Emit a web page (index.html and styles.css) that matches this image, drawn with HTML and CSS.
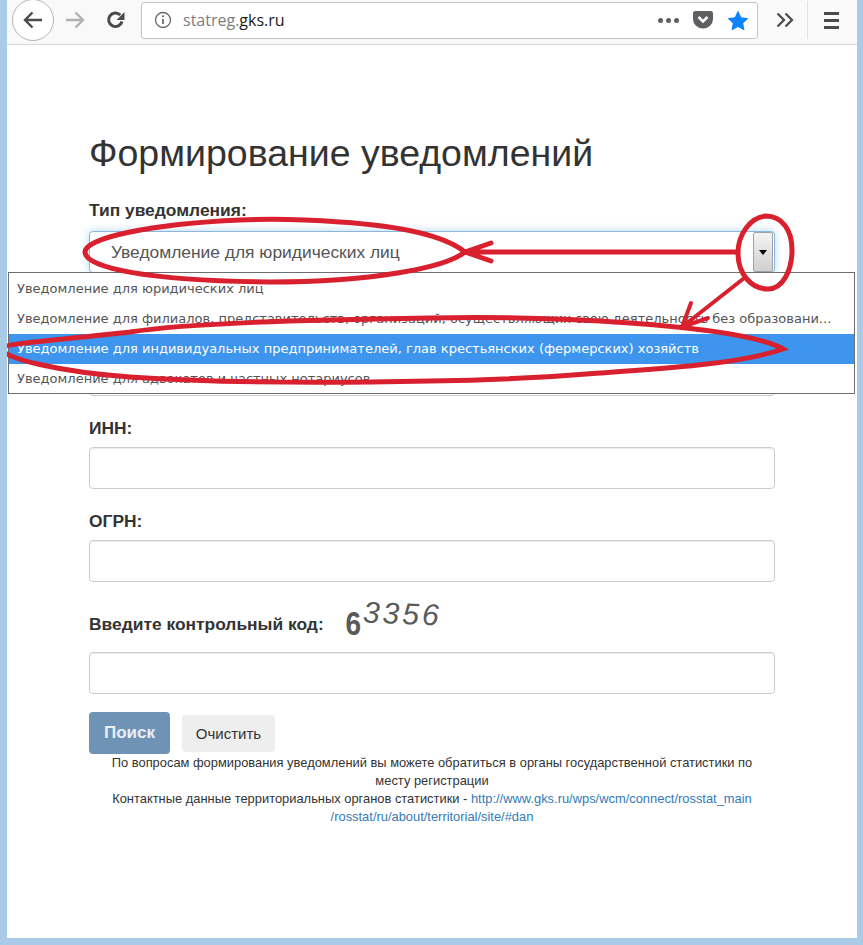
FILE: index.html
```html
<!DOCTYPE html>
<html lang="ru">
<head>
    <meta charset="UTF-8">
    <title>Формирование уведомлений</title>
    <link rel="stylesheet" href="styles.css">
</head>
<body>
    <div class="window">
        <div class="toolbar">
            <span class="back-btn">
                <svg width="22" height="20" viewBox="0 0 22 20"><path d="M20 10H3M10.500 2.500 3 10l7.500 7.500" fill="none" stroke="#4a4a4f" stroke-width="2.400"/></svg>
            </span>
            <svg class="fwd" width="22" height="20" viewBox="0 0 22 20"><path d="M2 10h17M11.500 2.500 19 10l-7.500 7.500" fill="none" stroke="#b1b1b3" stroke-width="2.400"/></svg>
            <svg class="reload" width="20" height="20" viewBox="0 0 20 20"><path d="M16 11.500A6.800 6.800 0 1 1 14.300 5" fill="none" stroke="#4a4a4f" stroke-width="3"/><path d="M18.500 2v8h-8z" fill="#4a4a4f"/></svg>
            <div class="urlbar">
                <svg class="info" width="18" height="18" viewBox="0 0 18 18"><circle cx="9" cy="9" r="7.500" fill="none" stroke="#6a6a6e" stroke-width="1.300"/><path d="M9 8v5" stroke="#6a6a6e" stroke-width="1.800"/><circle cx="9" cy="5.300" r="1.100" fill="#6a6a6e"/></svg>
                <span class="url"><span class="url-dim">statreg.</span>gks.ru</span>
                <span class="dots"><i></i><i></i><i></i></span>
                <svg class="pocket" width="20" height="18" viewBox="0 0 20 18"><path d="M2.500 0h15A2.500 2.500 0 0 1 20 2.500V8a10 9.500 0 0 1-20 0V2.500A2.500 2.500 0 0 1 2.500 0z" fill="#5f5f63"/><path d="M5.500 6 10 10.500 14.500 6" fill="none" stroke="#fff" stroke-width="2.600"/></svg>
                <svg class="star" width="22" height="21" viewBox="0 0 22 21"><path d="M11 .5l3.200 6.700 7.300 1-5.300 5 1.300 7.300L11 17l-6.500 3.500 1.300-7.300-5.300-5 7.300-1z" fill="#0a84ff"/></svg>
            </div>
            <svg class="more" width="18" height="16" viewBox="0 0 18 16"><path d="M1.500 1.500 8 8l-6.500 6.500M9.500 1.500 16 8l-6.500 6.500" fill="none" stroke="#4a4a4f" stroke-width="2.200"/></svg>
            <span class="sep"></span>
            <span class="burger"><i></i><i></i><i></i></span>
        </div>

        <div class="page">
            <h1>Формирование уведомлений</h1>

            <div class="field field-type">
                <label>Тип уведомления:</label>
                <div class="input select-box">
                    <span>Уведомление для юридических лиц</span>
                    <span class="select-btn"><i></i></span>
                </div>
            </div>

            <div class="field field-hidden">
                <div class="input"></div>
            </div>

            <div class="field">
                <label>ИНН:</label>
                <div class="input"></div>
            </div>

            <div class="field">
                <label>ОГРН:</label>
                <div class="input"></div>
            </div>

            <div class="field">
                <div class="captcha-row">
                    <label>Введите контрольный код:</label>
                    <span class="captcha"><b>6</b><em>3356</em></span>
                </div>
                <div class="input"></div>
            </div>

            <div class="buttons">
                <span class="btn-search">Поиск</span>
                <span class="btn-clear">Очистить</span>
            </div>

            <p class="note">
                По вопросам формирования уведомлений вы можете обратиться в органы государственной статистики по месту регистрации<br>
                Контактные данные территориальных органов статистики - <a href="#">http://www.gks.ru/wps/wcm/connect/rosstat_main<br>/rosstat/ru/about/territorial/site/#dan</a>
            </p>
        </div>

        <ul class="dropdown">
            <li>Уведомление для юридических лиц</li>
            <li>Уведомление для филиалов, представительств, организаций, осуществляющих свою деятельность без образовани...</li>
            <li class="active">Уведомление для индивидуальных предпринимателей, глав крестьянских (фермерских) хозяйств</li>
            <li>Уведомление для адвокатов и частных нотариусов</li>
        </ul>

        <svg class="marks" width="863" height="945" viewBox="0 0 863 945">
            <g fill="none" stroke="#d8202e" stroke-linecap="round">
                <path stroke-width="5" d="M465 252C445 236 400 226 340 222 300 219 260 219 240 220 150 224 85 238 85 252 85 268 150 281 270 282 370 282 445 268 465 252Z"/>
                <path stroke-width="5" d="M766 216C750 217 738 235 738 253 738 275 752 289 768 289 783 289 792 270 792 250 792 230 782 216 766 216Z"/>
                <path stroke-width="5" d="M465 252H737M465 252l26-9M465 252l26 9"/>
                <path stroke-width="4" d="M743 279 682 327M682 327l9-24M682 327l26-9"/>
                <path stroke-width="5" d="M783 349C760 336 700 328 630 323 560 318 480 317 430 318 300 320 190 323 130 332 60 340 2 343 2 349 2 358 60 372 130 377 220 383 340 383 430 381 500 380 540 378 600 373 660 369 740 364 783 349Z"/>
            </g>
        </svg>
    </div>
</body>
</html>
```
FILE: styles.css
```css
* {
    box-sizing: border-box;
}
body {
    margin: 0;
    font-family: "Liberation Sans", Arial, sans-serif;
    color: #333;
    background: #fff;
}
.window {
    position: relative;
    width: 863px;
    height: 945px;
    overflow: hidden;
    border-left: 7px solid #a9cbe8;
    border-right: 6px solid #a9cbe8;
    border-bottom: 7px solid #a9cbe8;
}
.toolbar {
    display: flex;
    align-items: center;
    height: 45px;
    margin-left: -7px;
    margin-right: -6px;
    background: #f9f9fa;
    border-bottom: 1px solid #d9d9db;
    position: relative;
}
.back-btn {
    display: flex;
    align-items: center;
    justify-content: center;
    flex: none;
    width: 42px;
    height: 42px;
    margin: -4px 0 0 12px;
    border: 1px solid #b5b5b7;
    border-radius: 50%;
    background: #fff;
}
.fwd {
    margin: -4px 0 0 10px;
}
.reload {
    margin: -4px 0 0 20px;
}
.urlbar {
    display: flex;
    align-items: center;
    width: 617px;
    height: 37px;
    margin: -4px 0 0 15px;
    padding: 0 8px 0 12px;
    background: #fff;
    border: 1px solid #c4c4c6;
    border-radius: 3px;
}
.url {
    margin-left: 11px;
    font-family: "Open Sans", sans-serif;
    font-size: 16px;
    color: #1a1a1a;
}
.url-dim {
    color: #7d7d80;
}
.dots {
    display: flex;
    gap: 3px;
    margin-left: auto;
}
.dots i {
    width: 5px;
    height: 5px;
    border-radius: 50%;
    background: #5f5f63;
}
.pocket {
    margin-left: 14px;
}
.star {
    margin-left: 14px;
}
.more {
    margin: -4px 0 0 18px;
}
.sep {
    width: 1px;
    height: 38px;
    margin: -4px 0 0 13px;
    background: #e2e2e4;
}
.burger {
    display: flex;
    flex-direction: column;
    gap: 4px;
    width: 15px;
    margin: -4px 0 0 16px;
}
.burger i {
    height: 3px;
    background: #4a4a4f;
}
.page {
    width: 686px;
    margin-left: 82px;
    padding-top: 88px;
}
h1 {
    margin: 0 0 27px;
    font-size: 37.500px;
    font-weight: 400;
    line-height: 40px;
}
label {
    display: block;
    height: 20px;
    margin-bottom: 9px;
    font-size: 17.400px;
    font-weight: 700;
    line-height: 20px;
}
.field {
    margin-bottom: 22px;
}
.field-type label {
    margin-bottom: 11px;
}
.field-hidden {
    margin-top: 81px;
}
.input {
    height: 42px;
    background: #fff;
    border: 1px solid #ccc;
    border-radius: 4px;
    box-shadow: inset 0 1px 1px rgba(0, 0, 0, .075);
}
.select-box {
    display: flex;
    align-items: center;
    justify-content: space-between;
    padding: 0 2px 0 21px;
    font-size: 17.400px;
    color: #555;
    border-color: #8cb6dc;
    box-shadow: 0 0 8px rgba(102, 175, 233, .5);
}
.select-btn {
    display: flex;
    align-items: center;
    justify-content: center;
    width: 20px;
    height: 40px;
    margin-right: -1px;
    background: linear-gradient(#f4f4f4, #cfcfcf);
    border: 1px solid #9aa4ad;
    border-radius: 2px;
}
.select-btn i {
    border-top: 5px solid #000;
    border-left: 4px solid transparent;
    border-right: 4px solid transparent;
}
.captcha-row {
    display: flex;
    align-items: center;
    height: 39px;
    margin-bottom: 9px;
}
.captcha-row label {
    margin: 0;
}
.captcha {
    display: flex;
    align-items: flex-start;
    margin: -6px 0 0 20px;
    color: #5a5a5a;
}
.captcha b {
    margin-top: 7px;
    font-size: 33px;
    line-height: 30px;
    transform: scaleX(.85);
}
.captcha em {
    margin-left: 1px;
    font-size: 30px;
    letter-spacing: 3px;
    line-height: 24px;
    transform: rotate(2deg);
}
.buttons {
    display: flex;
    align-items: center;
    gap: 12px;
    margin-top: -4px;
}
.btn-search {
    width: 81px;
    height: 42px;
    background: #6e93b5;
    border-radius: 4px;
    color: #e9eff5;
    font-size: 17px;
    font-weight: 700;
    line-height: 42px;
    text-align: center;
}
.btn-clear {
    width: 93px;
    height: 37px;
    background: #eee;
    border-radius: 4px;
    font-size: 15px;
    line-height: 37px;
    text-align: center;
}
.note {
    margin: 0;
    padding: 0 20px;
    font-size: 12.900px;
    line-height: 18px;
    text-align: center;
}
.note a {
    color: #337ab7;
    text-decoration: none;
}
.dropdown {
    position: absolute;
    top: 272px;
    left: 1px;
    width: 847px;
    height: 122px;
    margin: 0;
    padding: 1px 0 0;
    list-style: none;
    background: #fff;
    border: 1px solid #6e6e6e;
    font-family: "DejaVu Sans", sans-serif;
    font-size: 13px;
    color: #555;
}
.dropdown li {
    height: 30px;
    padding-left: 8px;
    line-height: 30px;
    white-space: nowrap;
    overflow: hidden;
}
.dropdown .active {
    background: #3d95ee;
    color: #fff;
}
.marks {
    position: absolute;
    top: 0;
    left: -7px;
    pointer-events: none;
}
```
